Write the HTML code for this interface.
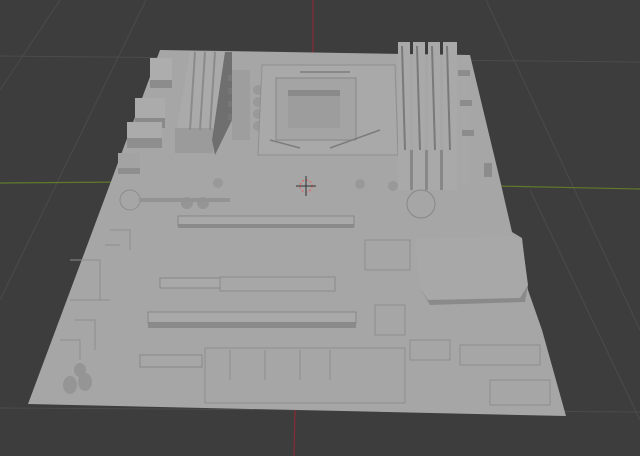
<!DOCTYPE html>
<html><head><meta charset="utf-8"><style>
html,body{margin:0;padding:0;background:#3d3d3d;width:640px;height:456px;overflow:hidden}
svg{display:block}
</style></head><body>
<svg width="640" height="456" viewBox="0 0 640 456" xmlns="http://www.w3.org/2000/svg">
<rect width="640" height="456" fill="#3d3d3d"/>
<g stroke="#4b4b4b" stroke-width="1" fill="none">
<line x1="0" y1="56" x2="640" y2="62"/>
<line x1="0" y1="408" x2="640" y2="412"/>
<line x1="146" y1="0" x2="0" y2="300"/>
<line x1="486" y1="0" x2="640" y2="330"/>
<line x1="530" y1="190" x2="640" y2="420"/>
<line x1="60" y1="0" x2="0" y2="90"/>
</g>
<line x1="0" y1="183" x2="130" y2="182" stroke="#5f7a2a" stroke-width="1.2"/>
<line x1="495" y1="186" x2="640" y2="189" stroke="#5f7a2a" stroke-width="1.2"/>
<line x1="313" y1="0" x2="313" y2="55" stroke="#8a2a36" stroke-width="1.2"/>
<line x1="295" y1="410" x2="294" y2="456" stroke="#8a2a36" stroke-width="1.2"/>
<polygon points="160,50 470,55 500,180 512,232 522,238 528,290 542,330 566,416 28,404" fill="#a6a6a6"/>
<g>
<rect x="150" y="58" width="22" height="22" fill="#adadad"/><rect x="150" y="80" width="22" height="8" fill="#8c8c8c"/>
<rect x="135" y="98" width="30" height="20" fill="#ababab"/><rect x="135" y="118" width="30" height="10" fill="#8a8a8a"/>
<rect x="127" y="122" width="35" height="25" fill="#ababab"/><rect x="127" y="138" width="35" height="10" fill="#8e8e8e"/>
<rect x="118" y="153" width="22" height="20" fill="#a3a3a3"/><rect x="118" y="168" width="22" height="6" fill="#8e8e8e"/>
<polygon points="190,52 225,52 212,140 175,140" fill="#aaaaaa"/>
<rect x="175" y="128" width="38" height="25" fill="#9b9b9b"/>
<polygon points="212,140 225,52 232,52 232,120 215,155" fill="#6f6f6f"/>
<line x1="195" y1="52" x2="190" y2="130" stroke="#8b8b8b" stroke-width="2"/>
<line x1="205" y1="52" x2="200" y2="130" stroke="#8b8b8b" stroke-width="2"/>
<line x1="215" y1="52" x2="210" y2="130" stroke="#8b8b8b" stroke-width="2"/>
<rect x="232" y="70" width="18" height="70" fill="#9e9e9e"/>
<g fill="#777"><rect x="228" y="75" width="4" height="6"/><rect x="228" y="88" width="4" height="6"/><rect x="228" y="101" width="4" height="6"/><rect x="228" y="114" width="4" height="6"/></g>
<g fill="#999"><circle cx="258" cy="90" r="5"/><circle cx="258" cy="102" r="5"/><circle cx="258" cy="114" r="5"/><circle cx="258" cy="126" r="5"/></g>
</g>
<polygon points="262,65 395,65 398,155 258,155" fill="#a9a9a9" stroke="#8f8f8f"/>
<rect x="276" y="78" width="80" height="62" fill="#a4a4a4" stroke="#888"/>
<rect x="288" y="90" width="52" height="38" fill="#9d9d9d"/>
<rect x="288" y="90" width="52" height="6" fill="#8a8a8a"/>
<path d="M270 140 L300 148 M330 148 L380 130 M300 72 L350 72" stroke="#7d7d7d" stroke-width="1.5"/>
<g>
<rect x="398" y="42" width="12" height="148" fill="#a9a9a9"/><line x1="402" y1="46" x2="405" y2="150" stroke="#7a7a7a" stroke-width="2"/>
<rect x="413" y="42" width="12" height="148" fill="#a9a9a9"/><line x1="417" y1="46" x2="420" y2="150" stroke="#7a7a7a" stroke-width="2"/>
<rect x="428" y="42" width="12" height="148" fill="#a9a9a9"/><line x1="432" y1="46" x2="435" y2="150" stroke="#7a7a7a" stroke-width="2"/>
<rect x="443" y="42" width="14" height="148" fill="#a9a9a9"/><line x1="447" y1="46" x2="450" y2="150" stroke="#7a7a7a" stroke-width="2"/>
<rect x="410" y="150" width="3" height="40" fill="#888"/><rect x="425" y="150" width="3" height="40" fill="#888"/><rect x="440" y="150" width="3" height="40" fill="#888"/>
<rect x="458" y="55" width="12" height="130" fill="#a7a7a7"/>
<g fill="#8c8c8c"><rect x="458" y="70" width="12" height="6"/><rect x="460" y="100" width="12" height="6"/><rect x="462" y="130" width="12" height="6"/><rect x="484" y="163" width="8" height="14"/></g>
</g>
<circle cx="421" cy="204" r="14" fill="none" stroke="#888" stroke-width="1"/>
<circle cx="360" cy="184" r="5" fill="#999"/><circle cx="393" cy="186" r="5" fill="#999"/><circle cx="218" cy="183" r="5" fill="#999"/>
<circle cx="187" cy="203" r="6" fill="#959595"/><circle cx="203" cy="203" r="6" fill="#959595"/>
<circle cx="306" cy="186" r="6" fill="none" stroke="#d66" stroke-width="1.2" stroke-dasharray="2 2"/>
<path d="M296 186 H316 M306 176 V196" stroke="#333" stroke-width="1"/>
<polygon points="415,238 512,236 522,240 528,285 520,298 428,300 420,290" fill="#a8a8a8"/>
<polygon points="420,288 428,300 520,298 528,285 525,302 430,305" fill="#8a8a8a"/>
<rect x="178" y="216" width="176" height="10" fill="#a9a9a9" stroke="#878787"/>
<rect x="178" y="224" width="176" height="4" fill="#8a8a8a"/>
<rect x="160" y="278" width="175" height="10" fill="#a9a9a9" stroke="#878787"/>
<rect x="220" y="277" width="115" height="14" fill="#a7a7a7" stroke="#8b8b8b"/>
<rect x="148" y="312" width="208" height="12" fill="#a9a9a9" stroke="#878787"/>
<rect x="148" y="322" width="208" height="6" fill="#8a8a8a"/>
<rect x="140" y="355" width="62" height="12" fill="#a7a7a7" stroke="#888"/>
<g fill="#959595"><ellipse cx="70" cy="385" rx="7" ry="9"/><ellipse cx="85" cy="382" rx="7" ry="9"/><ellipse cx="80" cy="370" rx="6" ry="7"/></g>
<g fill="none" stroke="#8d8d8d" stroke-width="1">
<rect x="205" y="348" width="200" height="55"/>
<path d="M230 350 V380 M265 350 V380 M300 350 V380 M330 350 V380"/>
<rect x="410" y="340" width="40" height="20"/>
<rect x="490" y="380" width="60" height="25"/>
<rect x="460" y="345" width="80" height="20"/>
<path d="M70 260 L100 260 L100 300 L70 300 M75 320 L95 320 L95 350"/>
<rect x="375" y="305" width="30" height="30"/>
<rect x="365" y="240" width="45" height="30"/>
<path d="M110 230 L130 230 L130 250 M105 245 L120 245 M60 340 L80 340 L80 360 M90 300 L110 300"/>
</g>
<circle cx="130" cy="200" r="10" fill="none" stroke="#8d8d8d"/>
<rect x="140" y="198" width="90" height="4" fill="#939393"/>
</svg>
</body></html>
